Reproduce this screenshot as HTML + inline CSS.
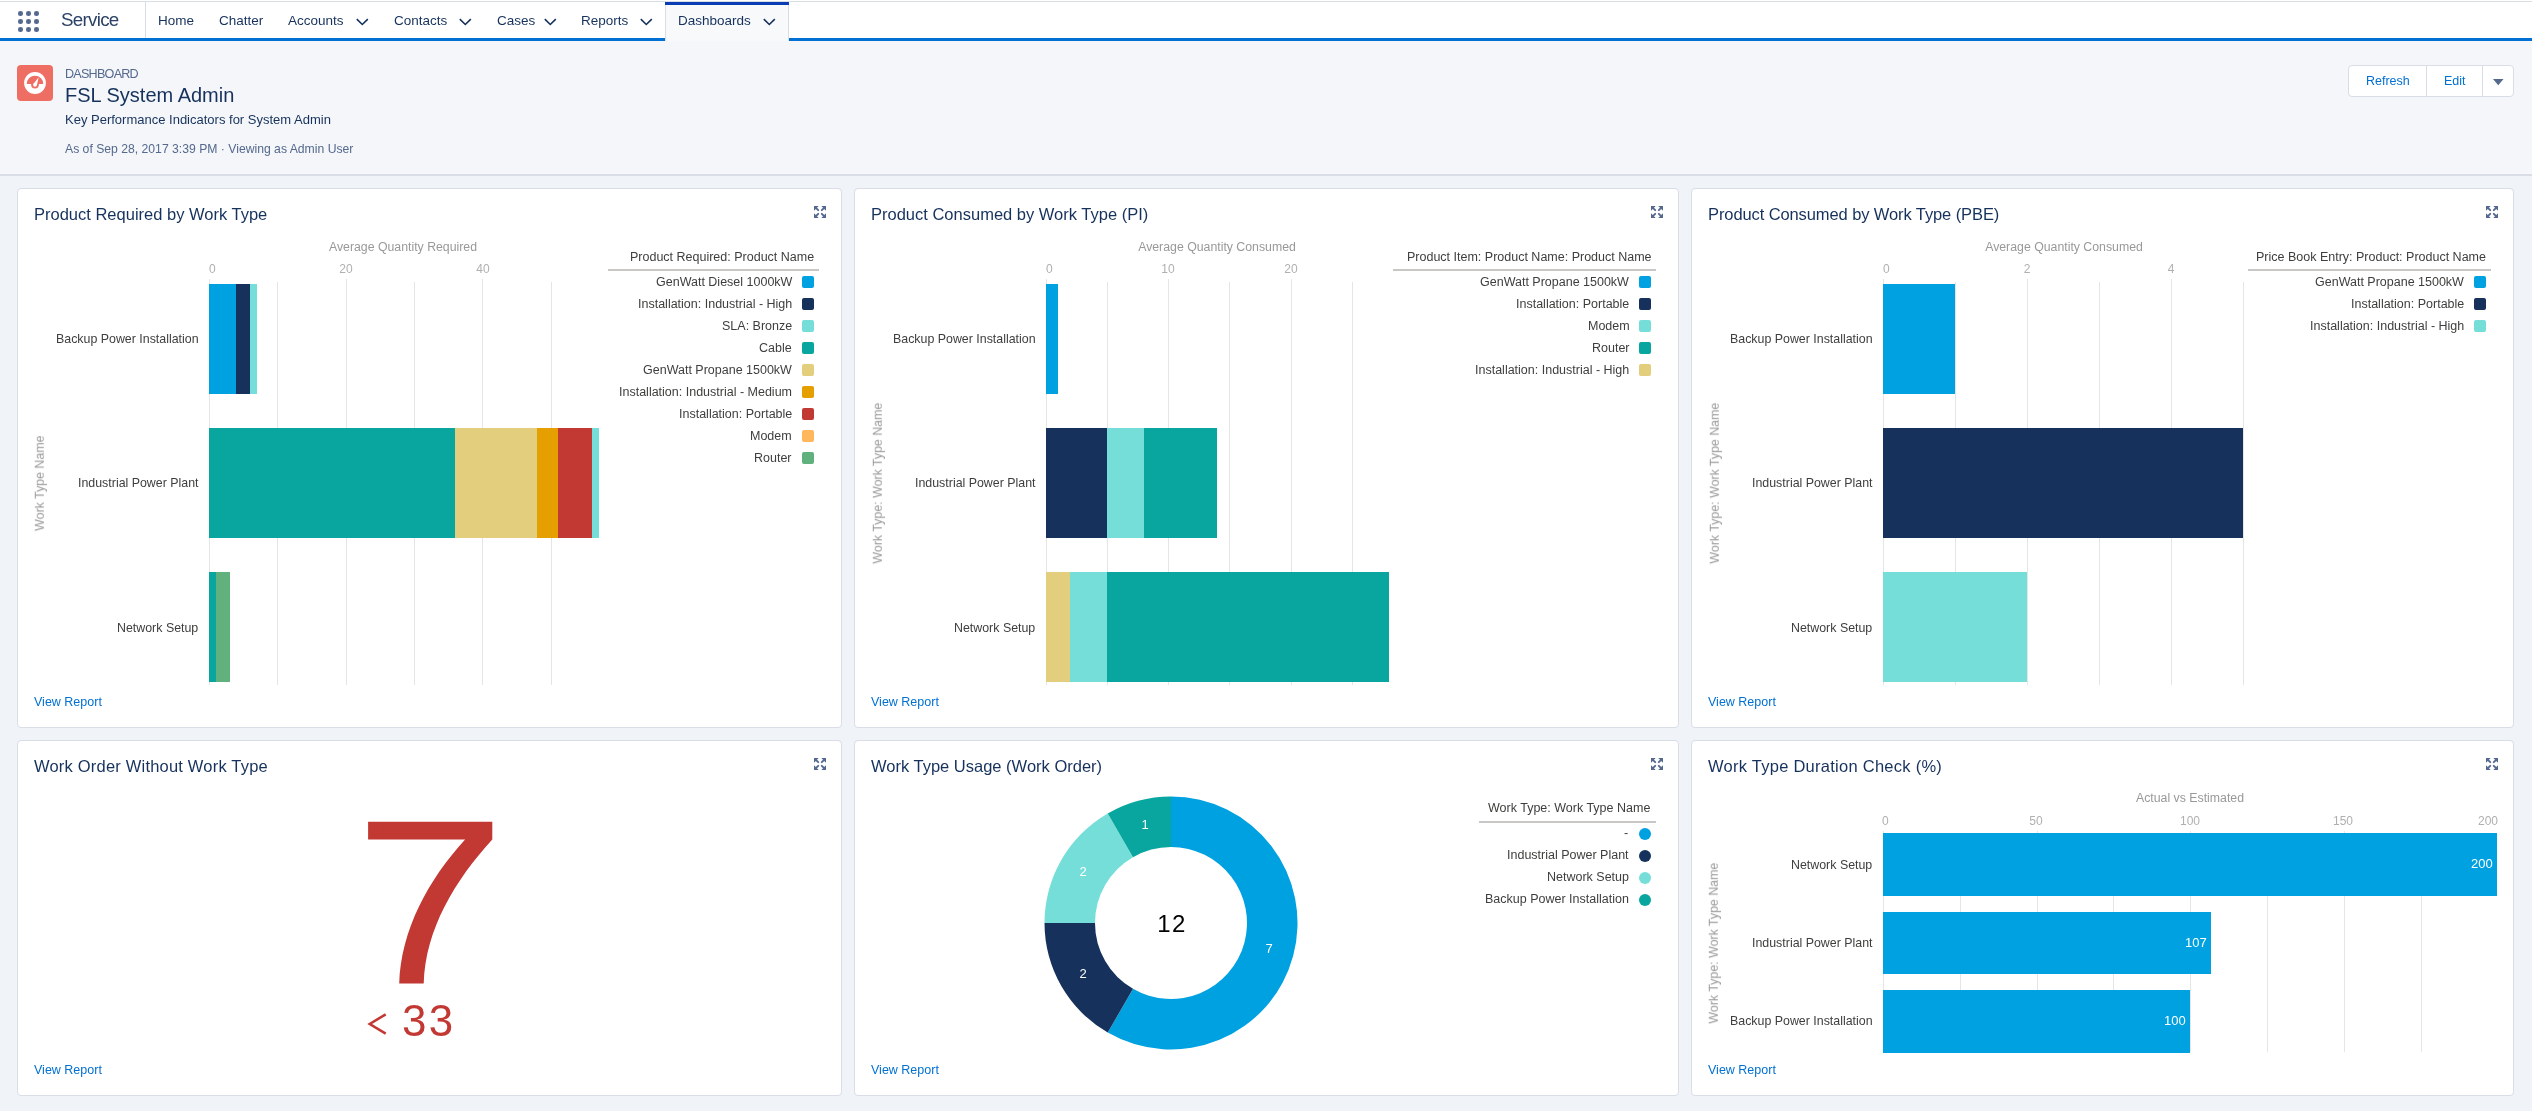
<!DOCTYPE html>
<html><head><meta charset="utf-8"><title>FSL System Admin</title>
<style>
html,body{margin:0;padding:0;}
body{width:2532px;height:1111px;overflow:hidden;position:relative;background:#f4f6f9;font-family:"Liberation Sans", sans-serif;}
.t{position:absolute;white-space:nowrap;font-family:"Liberation Sans", sans-serif;will-change:transform;}
.r{position:absolute;}
</style></head><body>
<div class="r" style="left:0.00px;top:0.00px;width:2532.00px;height:41.00px;background:#fff;"></div>
<div class="r" style="left:0.00px;top:1.00px;width:2532.00px;height:1.00px;background:#d8dde6;"></div>
<div class="r" style="left:0.00px;top:38.00px;width:2532.00px;height:3.00px;background:#0070d2;"></div>
<div class="r" style="left:18.20px;top:11.20px;width:4.6px;height:4.6px;border-radius:50%;background:#54698d"></div>
<div class="r" style="left:26.20px;top:11.20px;width:4.6px;height:4.6px;border-radius:50%;background:#54698d"></div>
<div class="r" style="left:34.20px;top:11.20px;width:4.6px;height:4.6px;border-radius:50%;background:#54698d"></div>
<div class="r" style="left:18.20px;top:19.20px;width:4.6px;height:4.6px;border-radius:50%;background:#54698d"></div>
<div class="r" style="left:26.20px;top:19.20px;width:4.6px;height:4.6px;border-radius:50%;background:#54698d"></div>
<div class="r" style="left:34.20px;top:19.20px;width:4.6px;height:4.6px;border-radius:50%;background:#54698d"></div>
<div class="r" style="left:18.20px;top:27.20px;width:4.6px;height:4.6px;border-radius:50%;background:#54698d"></div>
<div class="r" style="left:26.20px;top:27.20px;width:4.6px;height:4.6px;border-radius:50%;background:#54698d"></div>
<div class="r" style="left:34.20px;top:27.20px;width:4.6px;height:4.6px;border-radius:50%;background:#54698d"></div>
<div class="t" style="top:10.89px;font-size:18.8px;line-height:18.8px;color:#2b4266;left:61.20px;letter-spacing:-0.72px">Service</div>
<div class="r" style="left:145.00px;top:2.00px;width:1.00px;height:36.00px;background:#d8dde6;"></div>
<div class="r" style="left:665.00px;top:2.00px;width:124.00px;height:39.00px;background:#f7f9fb;border-left:1px solid #d8dde6;border-right:1px solid #d8dde6;box-sizing:border-box"></div>
<div class="r" style="left:665.00px;top:2.00px;width:124.00px;height:3.00px;background:#0a3cb4;"></div>
<div class="t" style="top:13.67px;font-size:13.5px;line-height:13.5px;color:#16325c;left:158.00px;">Home</div>
<div class="t" style="top:13.67px;font-size:13.5px;line-height:13.5px;color:#16325c;left:218.60px;">Chatter</div>
<div class="t" style="top:13.67px;font-size:13.5px;line-height:13.5px;color:#16325c;left:287.80px;">Accounts</div>
<svg class="r" style="left:356px;top:17.8px" width="13" height="8" viewBox="0 0 13 8"><path d="M0.8 1.2L6.3 6.5 11.8 1.2" fill="none" stroke="#16325c" stroke-width="1.6"/></svg>
<div class="t" style="top:13.67px;font-size:13.5px;line-height:13.5px;color:#16325c;left:393.60px;">Contacts</div>
<svg class="r" style="left:459px;top:17.8px" width="13" height="8" viewBox="0 0 13 8"><path d="M0.8 1.2L6.3 6.5 11.8 1.2" fill="none" stroke="#16325c" stroke-width="1.6"/></svg>
<div class="t" style="top:13.67px;font-size:13.5px;line-height:13.5px;color:#16325c;left:496.50px;">Cases</div>
<svg class="r" style="left:543.7px;top:17.8px" width="13" height="8" viewBox="0 0 13 8"><path d="M0.8 1.2L6.3 6.5 11.8 1.2" fill="none" stroke="#16325c" stroke-width="1.6"/></svg>
<div class="t" style="top:13.67px;font-size:13.5px;line-height:13.5px;color:#16325c;left:581.00px;">Reports</div>
<svg class="r" style="left:640px;top:17.8px" width="13" height="8" viewBox="0 0 13 8"><path d="M0.8 1.2L6.3 6.5 11.8 1.2" fill="none" stroke="#16325c" stroke-width="1.6"/></svg>
<div class="t" style="top:13.67px;font-size:13.5px;line-height:13.5px;color:#16325c;left:678.00px;">Dashboards</div>
<svg class="r" style="left:763px;top:17.8px" width="13" height="8" viewBox="0 0 13 8"><path d="M0.8 1.2L6.3 6.5 11.8 1.2" fill="none" stroke="#16325c" stroke-width="1.6"/></svg>
<div class="r" style="left:17px;top:65px;width:36px;height:36px;border-radius:4px;background:#ef6e64"></div>
<svg class="r" style="left:17px;top:65px" width="36" height="36" viewBox="0 0 36 36">
<circle cx="18" cy="18" r="10.9" fill="#fff"/>
<path d="M9.8 18.9 A8.2 8.2 0 0 1 26.2 18.9 Z" fill="#ef6e64"/>
<circle cx="18" cy="19.6" r="3.9" fill="#ef6e64"/>
<circle cx="18" cy="19.8" r="1.9" fill="#fff"/>
<path d="M16.2 19.3 L21.7 12.2 L19.9 20.2 Z" fill="#fff"/>
</svg>
<div class="t" style="top:67.53px;font-size:12.6px;line-height:12.6px;color:#54698d;left:65.20px;letter-spacing:-0.76px">DASHBOARD</div>
<div class="t" style="top:84.87px;font-size:20px;line-height:20px;color:#16325c;left:65.00px;">FSL System Admin</div>
<div class="t" style="top:112.80px;font-size:13px;line-height:13px;color:#16325c;left:65.00px;">Key Performance Indicators for System Admin</div>
<div class="t" style="top:142.67px;font-size:12.2px;line-height:12.2px;color:#54698d;left:65.00px;">As of Sep 28, 2017 3:39 PM &middot; Viewing as Admin User</div>
<div class="r" style="left:2348px;top:65px;width:164px;height:30px;background:#fff;border:1px solid #d8dde6;border-radius:4px"></div>
<div class="r" style="left:2426.00px;top:66.00px;width:1.00px;height:30.00px;background:#d8dde6;"></div>
<div class="r" style="left:2482.00px;top:66.00px;width:1.00px;height:30.00px;background:#d8dde6;"></div>
<div class="t" style="top:74.82px;font-size:12.5px;line-height:12.5px;color:#0070d2;left:2365.50px;">Refresh</div>
<div class="t" style="top:74.82px;font-size:12.5px;line-height:12.5px;color:#0070d2;left:2443.50px;">Edit</div>
<svg class="r" style="left:2492.5px;top:78.8px" width="11" height="7" viewBox="0 0 11 7"><path d="M0 0H10.5L5.25 6.3Z" fill="#54698d"/></svg>
<div class="r" style="left:0.00px;top:176.00px;width:2532.00px;height:935.00px;background:#f0f3f8;"></div>
<div class="r" style="left:0.00px;top:174.00px;width:2532.00px;height:2.00px;background:#d8dde6;"></div>
<div class="r" style="left:17px;top:188px;width:823px;height:538px;background:#fff;border:1px solid #d8dde6;border-radius:4px"></div>
<div class="r" style="left:17px;top:740px;width:823px;height:354px;background:#fff;border:1px solid #d8dde6;border-radius:4px"></div>
<div class="r" style="left:854px;top:188px;width:823px;height:538px;background:#fff;border:1px solid #d8dde6;border-radius:4px"></div>
<div class="r" style="left:854px;top:740px;width:823px;height:354px;background:#fff;border:1px solid #d8dde6;border-radius:4px"></div>
<div class="r" style="left:1691px;top:188px;width:821px;height:538px;background:#fff;border:1px solid #d8dde6;border-radius:4px"></div>
<div class="r" style="left:1691px;top:740px;width:821px;height:354px;background:#fff;border:1px solid #d8dde6;border-radius:4px"></div>
<div class="t" style="top:206.23px;font-size:16.5px;line-height:16.5px;color:#16325c;left:34.00px;">Product Required by Work Type</div>
<div class="t" style="top:757.93px;font-size:16.5px;line-height:16.5px;color:#16325c;left:34.00px;letter-spacing:0.2px">Work Order Without Work Type</div>
<svg class="r" style="left:814px;top:206px" width="12" height="12" viewBox="0 0 12 12">
<g fill="#54698d"><path d="M0 0H4.7L0 4.7Z"/><path d="M12 0V4.7L7.3 0Z"/><path d="M0 12V7.3L4.7 12Z"/><path d="M12 12H7.3L12 7.3Z"/></g>
<g stroke="#54698d" stroke-width="1.9" stroke-linecap="round"><path d="M1.6 1.6L4.2 4.2M10.4 1.6L7.8 4.2M1.6 10.4L4.2 7.8M10.4 10.4L7.8 7.8"/></g></svg>
<svg class="r" style="left:814px;top:758px" width="12" height="12" viewBox="0 0 12 12">
<g fill="#54698d"><path d="M0 0H4.7L0 4.7Z"/><path d="M12 0V4.7L7.3 0Z"/><path d="M0 12V7.3L4.7 12Z"/><path d="M12 12H7.3L12 7.3Z"/></g>
<g stroke="#54698d" stroke-width="1.9" stroke-linecap="round"><path d="M1.6 1.6L4.2 4.2M10.4 1.6L7.8 4.2M1.6 10.4L4.2 7.8M10.4 10.4L7.8 7.8"/></g></svg>
<div class="t" style="top:695.72px;font-size:12.5px;line-height:12.5px;color:#0070d2;left:34.00px;">View Report</div>
<div class="t" style="top:1063.62px;font-size:12.5px;line-height:12.5px;color:#0070d2;left:34.00px;">View Report</div>
<div class="t" style="top:206.23px;font-size:16.5px;line-height:16.5px;color:#16325c;left:871.00px;">Product Consumed by Work Type (PI)</div>
<div class="t" style="top:757.93px;font-size:16.5px;line-height:16.5px;color:#16325c;left:871.00px;">Work Type Usage (Work Order)</div>
<svg class="r" style="left:1651px;top:206px" width="12" height="12" viewBox="0 0 12 12">
<g fill="#54698d"><path d="M0 0H4.7L0 4.7Z"/><path d="M12 0V4.7L7.3 0Z"/><path d="M0 12V7.3L4.7 12Z"/><path d="M12 12H7.3L12 7.3Z"/></g>
<g stroke="#54698d" stroke-width="1.9" stroke-linecap="round"><path d="M1.6 1.6L4.2 4.2M10.4 1.6L7.8 4.2M1.6 10.4L4.2 7.8M10.4 10.4L7.8 7.8"/></g></svg>
<svg class="r" style="left:1651px;top:758px" width="12" height="12" viewBox="0 0 12 12">
<g fill="#54698d"><path d="M0 0H4.7L0 4.7Z"/><path d="M12 0V4.7L7.3 0Z"/><path d="M0 12V7.3L4.7 12Z"/><path d="M12 12H7.3L12 7.3Z"/></g>
<g stroke="#54698d" stroke-width="1.9" stroke-linecap="round"><path d="M1.6 1.6L4.2 4.2M10.4 1.6L7.8 4.2M1.6 10.4L4.2 7.8M10.4 10.4L7.8 7.8"/></g></svg>
<div class="t" style="top:695.72px;font-size:12.5px;line-height:12.5px;color:#0070d2;left:871.00px;">View Report</div>
<div class="t" style="top:1063.62px;font-size:12.5px;line-height:12.5px;color:#0070d2;left:871.00px;">View Report</div>
<div class="t" style="top:206.23px;font-size:16.5px;line-height:16.5px;color:#16325c;left:1708.00px;letter-spacing:-0.1px">Product Consumed by Work Type (PBE)</div>
<div class="t" style="top:757.93px;font-size:16.5px;line-height:16.5px;color:#16325c;left:1708.00px;letter-spacing:0.26px">Work Type Duration Check (%)</div>
<svg class="r" style="left:2486px;top:206px" width="12" height="12" viewBox="0 0 12 12">
<g fill="#54698d"><path d="M0 0H4.7L0 4.7Z"/><path d="M12 0V4.7L7.3 0Z"/><path d="M0 12V7.3L4.7 12Z"/><path d="M12 12H7.3L12 7.3Z"/></g>
<g stroke="#54698d" stroke-width="1.9" stroke-linecap="round"><path d="M1.6 1.6L4.2 4.2M10.4 1.6L7.8 4.2M1.6 10.4L4.2 7.8M10.4 10.4L7.8 7.8"/></g></svg>
<svg class="r" style="left:2486px;top:758px" width="12" height="12" viewBox="0 0 12 12">
<g fill="#54698d"><path d="M0 0H4.7L0 4.7Z"/><path d="M12 0V4.7L7.3 0Z"/><path d="M0 12V7.3L4.7 12Z"/><path d="M12 12H7.3L12 7.3Z"/></g>
<g stroke="#54698d" stroke-width="1.9" stroke-linecap="round"><path d="M1.6 1.6L4.2 4.2M10.4 1.6L7.8 4.2M1.6 10.4L4.2 7.8M10.4 10.4L7.8 7.8"/></g></svg>
<div class="t" style="top:695.72px;font-size:12.5px;line-height:12.5px;color:#0070d2;left:1708.00px;">View Report</div>
<div class="t" style="top:1063.62px;font-size:12.5px;line-height:12.5px;color:#0070d2;left:1708.00px;">View Report</div>
<div class="t" style="top:240.79px;font-size:12.3px;line-height:12.3px;color:#999999;left:-196.70px;width:1200px;text-align:center;">Average Quantity Required</div>
<div class="r" style="left:209.00px;top:278.70px;width:1.00px;height:406.30px;background:#e5e5e5;"></div>
<div class="r" style="left:277.00px;top:281.60px;width:1.00px;height:403.40px;background:#e5e5e5;"></div>
<div class="r" style="left:345.80px;top:278.70px;width:1.00px;height:406.30px;background:#e5e5e5;"></div>
<div class="r" style="left:413.80px;top:281.60px;width:1.00px;height:403.40px;background:#e5e5e5;"></div>
<div class="r" style="left:482.00px;top:278.70px;width:1.00px;height:406.30px;background:#e5e5e5;"></div>
<div class="r" style="left:550.80px;top:281.60px;width:1.00px;height:403.40px;background:#e5e5e5;"></div>
<div class="t" style="top:262.74px;font-size:12px;line-height:12px;color:#b0b0b0;left:208.90px;">0</div>
<div class="t" style="top:262.74px;font-size:12px;line-height:12px;color:#b0b0b0;left:-254.20px;width:1200px;text-align:center;">20</div>
<div class="t" style="top:262.74px;font-size:12px;line-height:12px;color:#b0b0b0;left:-117.40px;width:1200px;text-align:center;">40</div>
<div class="r" style="left:209.00px;top:284.00px;width:27.36px;height:110.00px;background:#00a1e0;"></div>
<div class="r" style="left:236.36px;top:284.00px;width:13.68px;height:110.00px;background:#16325c;"></div>
<div class="r" style="left:250.04px;top:284.00px;width:6.84px;height:110.00px;background:#76ded9;"></div>
<div class="r" style="left:209.00px;top:428.00px;width:246.24px;height:110.00px;background:#08a69e;"></div>
<div class="r" style="left:455.24px;top:428.00px;width:82.08px;height:110.00px;background:#e2ce7d;"></div>
<div class="r" style="left:537.32px;top:428.00px;width:20.52px;height:110.00px;background:#e69f00;"></div>
<div class="r" style="left:557.84px;top:428.00px;width:34.20px;height:110.00px;background:#c23934;"></div>
<div class="r" style="left:592.04px;top:428.00px;width:6.84px;height:110.00px;background:#76ded9;"></div>
<div class="r" style="left:209.00px;top:572.00px;width:6.84px;height:110.00px;background:#08a69e;"></div>
<div class="r" style="left:215.84px;top:572.00px;width:13.68px;height:110.00px;background:#60b17d;"></div>
<div class="t" style="top:332.60px;font-size:12.4px;line-height:12.4px;color:#3e3e3c;right:2333.50px;text-align:right;">Backup Power Installation</div>
<div class="t" style="top:476.90px;font-size:12.4px;line-height:12.4px;color:#3e3e3c;right:2333.50px;text-align:right;">Industrial Power Plant</div>
<div class="t" style="top:621.80px;font-size:12.4px;line-height:12.4px;color:#3e3e3c;right:2333.50px;text-align:right;">Network Setup</div>
<div class="t" style="left:-260px;top:476.80px;width:600px;text-align:center;font-size:12.4px;line-height:12.4px;color:#999999;transform:rotate(-90deg)">Work Type Name</div>
<div class="t" style="top:250.72px;font-size:12.5px;line-height:12.5px;color:#3e3e3c;right:1718.00px;text-align:right;">Product Required: Product Name</div>
<div class="r" style="left:608.00px;top:269.00px;width:211.00px;height:2.00px;background:#c9c7c5;"></div>
<div class="t" style="top:275.72px;font-size:12.5px;line-height:12.5px;color:#3e3e3c;right:1740.00px;text-align:right;">GenWatt Diesel 1000kW</div>
<div class="r" style="left:802.00px;top:276.30px;width:12.00px;height:12.00px;background:#00a1e0;border-radius:2px"></div>
<div class="t" style="top:297.72px;font-size:12.5px;line-height:12.5px;color:#3e3e3c;right:1740.00px;text-align:right;">Installation: Industrial - High</div>
<div class="r" style="left:802.00px;top:298.30px;width:12.00px;height:12.00px;background:#16325c;border-radius:2px"></div>
<div class="t" style="top:319.72px;font-size:12.5px;line-height:12.5px;color:#3e3e3c;right:1740.00px;text-align:right;">SLA: Bronze</div>
<div class="r" style="left:802.00px;top:320.30px;width:12.00px;height:12.00px;background:#76ded9;border-radius:2px"></div>
<div class="t" style="top:341.72px;font-size:12.5px;line-height:12.5px;color:#3e3e3c;right:1740.00px;text-align:right;">Cable</div>
<div class="r" style="left:802.00px;top:342.30px;width:12.00px;height:12.00px;background:#08a69e;border-radius:2px"></div>
<div class="t" style="top:363.72px;font-size:12.5px;line-height:12.5px;color:#3e3e3c;right:1740.00px;text-align:right;">GenWatt Propane 1500kW</div>
<div class="r" style="left:802.00px;top:364.30px;width:12.00px;height:12.00px;background:#e2ce7d;border-radius:2px"></div>
<div class="t" style="top:385.72px;font-size:12.5px;line-height:12.5px;color:#3e3e3c;right:1740.00px;text-align:right;">Installation: Industrial - Medium</div>
<div class="r" style="left:802.00px;top:386.30px;width:12.00px;height:12.00px;background:#e69f00;border-radius:2px"></div>
<div class="t" style="top:407.72px;font-size:12.5px;line-height:12.5px;color:#3e3e3c;right:1740.00px;text-align:right;">Installation: Portable</div>
<div class="r" style="left:802.00px;top:408.30px;width:12.00px;height:12.00px;background:#c23934;border-radius:2px"></div>
<div class="t" style="top:429.72px;font-size:12.5px;line-height:12.5px;color:#3e3e3c;right:1740.00px;text-align:right;">Modem</div>
<div class="r" style="left:802.00px;top:430.30px;width:12.00px;height:12.00px;background:#ffb75d;border-radius:2px"></div>
<div class="t" style="top:451.72px;font-size:12.5px;line-height:12.5px;color:#3e3e3c;right:1740.00px;text-align:right;">Router</div>
<div class="r" style="left:802.00px;top:452.30px;width:12.00px;height:12.00px;background:#60b17d;border-radius:2px"></div>
<div class="t" style="top:240.79px;font-size:12.3px;line-height:12.3px;color:#999999;left:617.40px;width:1200px;text-align:center;">Average Quantity Consumed</div>
<div class="r" style="left:1045.90px;top:278.70px;width:1.00px;height:406.30px;background:#e5e5e5;"></div>
<div class="r" style="left:1106.70px;top:281.60px;width:1.00px;height:403.40px;background:#e5e5e5;"></div>
<div class="r" style="left:1167.80px;top:278.70px;width:1.00px;height:406.30px;background:#e5e5e5;"></div>
<div class="r" style="left:1229.10px;top:281.60px;width:1.00px;height:403.40px;background:#e5e5e5;"></div>
<div class="r" style="left:1290.80px;top:278.70px;width:1.00px;height:406.30px;background:#e5e5e5;"></div>
<div class="r" style="left:1352.10px;top:281.60px;width:1.00px;height:403.40px;background:#e5e5e5;"></div>
<div class="t" style="top:262.74px;font-size:12px;line-height:12px;color:#b0b0b0;left:1045.80px;">0</div>
<div class="t" style="top:262.74px;font-size:12px;line-height:12px;color:#b0b0b0;left:567.80px;width:1200px;text-align:center;">10</div>
<div class="t" style="top:262.74px;font-size:12px;line-height:12px;color:#b0b0b0;left:690.80px;width:1200px;text-align:center;">20</div>
<div class="r" style="left:1046.00px;top:284.00px;width:12.23px;height:110.00px;background:#00a1e0;"></div>
<div class="r" style="left:1046.00px;top:428.00px;width:61.17px;height:110.00px;background:#16325c;"></div>
<div class="r" style="left:1107.17px;top:428.00px;width:36.71px;height:110.00px;background:#76ded9;"></div>
<div class="r" style="left:1143.88px;top:428.00px;width:73.41px;height:110.00px;background:#08a69e;"></div>
<div class="r" style="left:1046.00px;top:572.00px;width:24.47px;height:110.00px;background:#e2ce7d;"></div>
<div class="r" style="left:1070.47px;top:572.00px;width:36.70px;height:110.00px;background:#76ded9;"></div>
<div class="r" style="left:1107.17px;top:572.00px;width:281.40px;height:110.00px;background:#08a69e;"></div>
<div class="t" style="top:332.60px;font-size:12.4px;line-height:12.4px;color:#3e3e3c;right:1496.50px;text-align:right;">Backup Power Installation</div>
<div class="t" style="top:476.90px;font-size:12.4px;line-height:12.4px;color:#3e3e3c;right:1496.50px;text-align:right;">Industrial Power Plant</div>
<div class="t" style="top:621.80px;font-size:12.4px;line-height:12.4px;color:#3e3e3c;right:1496.50px;text-align:right;">Network Setup</div>
<div class="t" style="left:578px;top:476.80px;width:600px;text-align:center;font-size:12.4px;line-height:12.4px;color:#999999;transform:rotate(-90deg)">Work Type: Work Type Name</div>
<div class="t" style="top:250.72px;font-size:12.5px;line-height:12.5px;color:#3e3e3c;right:880.80px;text-align:right;">Product Item: Product Name: Product Name</div>
<div class="r" style="left:1393.00px;top:269.00px;width:263.00px;height:2.00px;background:#c9c7c5;"></div>
<div class="t" style="top:275.72px;font-size:12.5px;line-height:12.5px;color:#3e3e3c;right:902.80px;text-align:right;">GenWatt Propane 1500kW</div>
<div class="r" style="left:1639.20px;top:276.30px;width:12.00px;height:12.00px;background:#00a1e0;border-radius:2px"></div>
<div class="t" style="top:297.72px;font-size:12.5px;line-height:12.5px;color:#3e3e3c;right:902.80px;text-align:right;">Installation: Portable</div>
<div class="r" style="left:1639.20px;top:298.30px;width:12.00px;height:12.00px;background:#16325c;border-radius:2px"></div>
<div class="t" style="top:319.72px;font-size:12.5px;line-height:12.5px;color:#3e3e3c;right:902.80px;text-align:right;">Modem</div>
<div class="r" style="left:1639.20px;top:320.30px;width:12.00px;height:12.00px;background:#76ded9;border-radius:2px"></div>
<div class="t" style="top:341.72px;font-size:12.5px;line-height:12.5px;color:#3e3e3c;right:902.80px;text-align:right;">Router</div>
<div class="r" style="left:1639.20px;top:342.30px;width:12.00px;height:12.00px;background:#08a69e;border-radius:2px"></div>
<div class="t" style="top:363.72px;font-size:12.5px;line-height:12.5px;color:#3e3e3c;right:902.80px;text-align:right;">Installation: Industrial - High</div>
<div class="r" style="left:1639.20px;top:364.30px;width:12.00px;height:12.00px;background:#e2ce7d;border-radius:2px"></div>
<div class="t" style="top:240.79px;font-size:12.3px;line-height:12.3px;color:#999999;left:1463.50px;width:1200px;text-align:center;">Average Quantity Consumed</div>
<div class="r" style="left:1882.90px;top:278.70px;width:1.00px;height:406.30px;background:#e5e5e5;"></div>
<div class="r" style="left:1954.90px;top:281.60px;width:1.00px;height:403.40px;background:#e5e5e5;"></div>
<div class="r" style="left:2026.90px;top:278.70px;width:1.00px;height:406.30px;background:#e5e5e5;"></div>
<div class="r" style="left:2098.90px;top:281.60px;width:1.00px;height:403.40px;background:#e5e5e5;"></div>
<div class="r" style="left:2170.90px;top:278.70px;width:1.00px;height:406.30px;background:#e5e5e5;"></div>
<div class="r" style="left:2242.90px;top:281.60px;width:1.00px;height:403.40px;background:#e5e5e5;"></div>
<div class="t" style="top:262.74px;font-size:12px;line-height:12px;color:#b0b0b0;left:1882.80px;">0</div>
<div class="t" style="top:262.74px;font-size:12px;line-height:12px;color:#b0b0b0;left:1426.90px;width:1200px;text-align:center;">2</div>
<div class="t" style="top:262.74px;font-size:12px;line-height:12px;color:#b0b0b0;left:1570.90px;width:1200px;text-align:center;">4</div>
<div class="r" style="left:1883.00px;top:284.00px;width:72.00px;height:110.00px;background:#00a1e0;"></div>
<div class="r" style="left:1883.00px;top:428.00px;width:360.00px;height:110.00px;background:#16325c;"></div>
<div class="r" style="left:1883.00px;top:572.00px;width:144.00px;height:110.00px;background:#76ded9;"></div>
<div class="t" style="top:332.60px;font-size:12.4px;line-height:12.4px;color:#3e3e3c;right:659.70px;text-align:right;">Backup Power Installation</div>
<div class="t" style="top:476.90px;font-size:12.4px;line-height:12.4px;color:#3e3e3c;right:659.70px;text-align:right;">Industrial Power Plant</div>
<div class="t" style="top:621.80px;font-size:12.4px;line-height:12.4px;color:#3e3e3c;right:659.70px;text-align:right;">Network Setup</div>
<div class="t" style="left:1415px;top:476.80px;width:600px;text-align:center;font-size:12.4px;line-height:12.4px;color:#999999;transform:rotate(-90deg)">Work Type: Work Type Name</div>
<div class="t" style="top:250.72px;font-size:12.5px;line-height:12.5px;color:#3e3e3c;right:46.20px;text-align:right;">Price Book Entry: Product: Product Name</div>
<div class="r" style="left:2248.00px;top:269.00px;width:243.00px;height:2.00px;background:#c9c7c5;"></div>
<div class="t" style="top:275.72px;font-size:12.5px;line-height:12.5px;color:#3e3e3c;right:68.20px;text-align:right;">GenWatt Propane 1500kW</div>
<div class="r" style="left:2473.80px;top:276.30px;width:12.00px;height:12.00px;background:#00a1e0;border-radius:2px"></div>
<div class="t" style="top:297.72px;font-size:12.5px;line-height:12.5px;color:#3e3e3c;right:68.20px;text-align:right;">Installation: Portable</div>
<div class="r" style="left:2473.80px;top:298.30px;width:12.00px;height:12.00px;background:#16325c;border-radius:2px"></div>
<div class="t" style="top:319.72px;font-size:12.5px;line-height:12.5px;color:#3e3e3c;right:68.20px;text-align:right;">Installation: Industrial - High</div>
<div class="r" style="left:2473.80px;top:320.30px;width:12.00px;height:12.00px;background:#76ded9;border-radius:2px"></div>
<svg class="r" style="left:0;top:0" width="2532" height="1111" viewBox="0 0 2532 1111">
<path d="M368.1 821.8 H492.3 V839.4 C455 880 425 930 423.7 983.4 H399.2 C401 930 428 880 465.1 839.4 H368.1 Z" fill="#c23934"/>
</svg>
<svg class="r" style="left:360px;top:1005px" width="30" height="40" viewBox="360 1005 30 40"><path d="M385.7 1014.3 L369.8 1024 L385.7 1033.6" fill="none" stroke="#c23934" stroke-width="2.6" stroke-linejoin="miter"/></svg>
<div class="t" style="top:999.05px;font-size:44px;line-height:44px;color:#c23934;left:402.20px;letter-spacing:2.2px">33</div>
<svg class="r" style="left:0;top:0" width="2532" height="1111" viewBox="0 0 2532 1111"><path d="M1171.00 796.50 A126.5 126.5 0 1 1 1107.75 1032.55 L1133.00 988.82 A76 76 0 1 0 1171.00 847.00 Z" fill="#00a1e0"/><path d="M1107.75 1032.55 A126.5 126.5 0 0 1 1044.50 923.00 L1095.00 923.00 A76 76 0 0 0 1133.00 988.82 Z" fill="#16325c"/><path d="M1044.50 923.00 A126.5 126.5 0 0 1 1107.75 813.45 L1133.00 857.18 A76 76 0 0 0 1095.00 923.00 Z" fill="#76ded9"/><path d="M1107.75 813.45 A126.5 126.5 0 0 1 1171.00 796.50 L1171.00 847.00 A76 76 0 0 0 1133.00 857.18 Z" fill="#08a69e"/></svg>
<div class="t" style="top:942.20px;font-size:13px;line-height:13px;color:#fff;left:668.80px;width:1200px;text-align:center;">7</div>
<div class="t" style="top:966.62px;font-size:13px;line-height:13px;color:#fff;left:483.31px;width:1200px;text-align:center;">2</div>
<div class="t" style="top:865.37px;font-size:13px;line-height:13px;color:#fff;left:483.31px;width:1200px;text-align:center;">2</div>
<div class="t" style="top:818.20px;font-size:13px;line-height:13px;color:#fff;left:544.79px;width:1200px;text-align:center;">1</div>
<div class="t" style="top:911.78px;font-size:24px;line-height:24px;color:#000;left:572.20px;width:1200px;text-align:center;letter-spacing:1.4px">12</div>
<div class="t" style="top:802.12px;font-size:12.5px;line-height:12.5px;color:#3e3e3c;right:881.50px;text-align:right;">Work Type: Work Type Name</div>
<div class="r" style="left:1479.00px;top:821.00px;width:177.00px;height:2.00px;background:#c9c7c5;"></div>
<div class="t" style="top:827.12px;font-size:12.5px;line-height:12.5px;color:#3e3e3c;right:903.50px;text-align:right;">-</div>
<div class="r" style="left:1638.50px;top:827.70px;width:12.00px;height:12.00px;background:#00a1e0;border-radius:50%"></div>
<div class="t" style="top:849.12px;font-size:12.5px;line-height:12.5px;color:#3e3e3c;right:903.50px;text-align:right;">Industrial Power Plant</div>
<div class="r" style="left:1638.50px;top:849.70px;width:12.00px;height:12.00px;background:#16325c;border-radius:50%"></div>
<div class="t" style="top:871.12px;font-size:12.5px;line-height:12.5px;color:#3e3e3c;right:903.50px;text-align:right;">Network Setup</div>
<div class="r" style="left:1638.50px;top:871.70px;width:12.00px;height:12.00px;background:#76ded9;border-radius:50%"></div>
<div class="t" style="top:893.12px;font-size:12.5px;line-height:12.5px;color:#3e3e3c;right:903.50px;text-align:right;">Backup Power Installation</div>
<div class="r" style="left:1638.50px;top:893.70px;width:12.00px;height:12.00px;background:#08a69e;border-radius:50%"></div>
<div class="t" style="top:792.19px;font-size:12.3px;line-height:12.3px;color:#999999;left:1589.60px;width:1200px;text-align:center;">Actual vs Estimated</div>
<div class="r" style="left:1882.80px;top:830.60px;width:1.00px;height:221.40px;background:#e5e5e5;"></div>
<div class="r" style="left:1960.10px;top:833.00px;width:1.00px;height:219.00px;background:#e5e5e5;"></div>
<div class="r" style="left:2036.90px;top:830.60px;width:1.00px;height:221.40px;background:#e5e5e5;"></div>
<div class="r" style="left:2113.10px;top:833.00px;width:1.00px;height:219.00px;background:#e5e5e5;"></div>
<div class="r" style="left:2189.80px;top:830.60px;width:1.00px;height:221.40px;background:#e5e5e5;"></div>
<div class="r" style="left:2266.80px;top:833.00px;width:1.00px;height:219.00px;background:#e5e5e5;"></div>
<div class="r" style="left:2343.80px;top:830.60px;width:1.00px;height:221.40px;background:#e5e5e5;"></div>
<div class="r" style="left:2421.10px;top:833.00px;width:1.00px;height:219.00px;background:#e5e5e5;"></div>
<div class="r" style="left:1870px;top:800px;width:627.5px;height:40px;overflow:hidden">
<div class="t" style="top:15.04px;font-size:12px;line-height:12px;color:#b0b0b0;left:12.40px;">0</div>
<div class="t" style="top:15.04px;font-size:12px;line-height:12px;color:#b0b0b0;left:-134.00px;width:600px;text-align:center;">50</div>
<div class="t" style="top:15.04px;font-size:12px;line-height:12px;color:#b0b0b0;left:19.50px;width:600px;text-align:center;">100</div>
<div class="t" style="top:15.04px;font-size:12px;line-height:12px;color:#b0b0b0;left:173.00px;width:600px;text-align:center;">150</div>
<div class="t" style="top:15.04px;font-size:12px;line-height:12px;color:#b0b0b0;left:27.60px;width:600px;text-align:right;">200</div>
</div>
<div class="r" style="left:1883.00px;top:833.00px;width:614.00px;height:62.60px;background:#00a1e0;"></div>
<div class="t" style="top:857.30px;font-size:13px;line-height:13px;color:#fff;right:39.30px;text-align:right;">200</div>
<div class="r" style="left:1883.00px;top:911.80px;width:327.50px;height:62.20px;background:#00a1e0;"></div>
<div class="t" style="top:935.90px;font-size:13px;line-height:13px;color:#fff;right:325.80px;text-align:right;">107</div>
<div class="r" style="left:1883.00px;top:990.20px;width:307.30px;height:62.50px;background:#00a1e0;"></div>
<div class="t" style="top:1014.45px;font-size:13px;line-height:13px;color:#fff;right:346.00px;text-align:right;">100</div>
<div class="t" style="top:858.50px;font-size:12.4px;line-height:12.4px;color:#3e3e3c;right:659.70px;text-align:right;">Network Setup</div>
<div class="t" style="top:936.90px;font-size:12.4px;line-height:12.4px;color:#3e3e3c;right:659.70px;text-align:right;">Industrial Power Plant</div>
<div class="t" style="top:1015.30px;font-size:12.4px;line-height:12.4px;color:#3e3e3c;right:659.70px;text-align:right;">Backup Power Installation</div>
<div class="t" style="left:1414.3px;top:936.80px;width:600px;text-align:center;font-size:12.4px;line-height:12.4px;color:#999999;transform:rotate(-90deg)">Work Type: Work Type Name</div>
</body></html>
